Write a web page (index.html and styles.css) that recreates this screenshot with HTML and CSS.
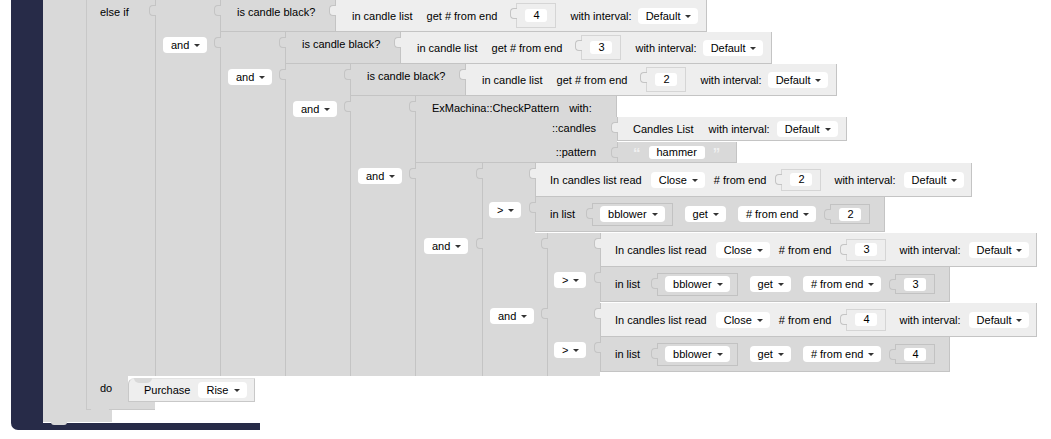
FILE: index.html
```html
<!DOCTYPE html>
<html lang="en">
<head>
  <meta charset="UTF-8" />
  <title>Strategy Blocks</title>
  <meta name="viewport" content="width=device-width, initial-scale=1.0" />
  <link rel="stylesheet" href="styles.css">
</head>
<body>

  <div class="workspace">
    <div class="navy">
      <div class="navy-row">
        <div class="navy-arm"></div>

        <div class="outer">
          <div class="outer-row">
            <div class="outer-arm"></div>

            <!-- else if / do block -->
            <div class="ifb">
              <div class="ifb-row">
                <div class="ifb-lbl"><span class="t">else if</span></div>
                <div class="slot">

                  <!-- and #1 -->
                  <div class="vb logic">
                    <div class="row">
                      <div class="lbl"></div>
                      <div class="slot">
                        <div class="vb inline">
                          <div class="is-black"><span class="t">is candle black?</span></div>
                          <div class="slot">
                            <div class="vb flat light incandle">
                              <span class="t">in candle list</span>
                              <span class="t">get # from end</span>
                              <span class="vb num"><span class="field">4</span></span>
                              <span class="pair"><span class="t">with interval:</span><span class="dd">Default</span></span>
                            </div>
                          </div>
                        </div>
                      </div>
                    </div>
                    <div class="row">
                      <div class="lbl"><span class="dd">and</span></div>
                      <div class="slot">

                        <!-- and #2 -->
                        <div class="vb logic">
                          <div class="row">
                            <div class="lbl"></div>
                            <div class="slot">
                              <div class="vb inline">
                                <div class="is-black"><span class="t">is candle black?</span></div>
                                <div class="slot">
                                  <div class="vb flat light incandle">
                                    <span class="t">in candle list</span>
                                    <span class="t">get # from end</span>
                                    <span class="vb num"><span class="field">3</span></span>
                                    <span class="pair"><span class="t">with interval:</span><span class="dd">Default</span></span>
                                  </div>
                                </div>
                              </div>
                            </div>
                          </div>
                          <div class="row">
                            <div class="lbl"><span class="dd">and</span></div>
                            <div class="slot">

                              <!-- and #3 -->
                              <div class="vb logic">
                                <div class="row">
                                  <div class="lbl"></div>
                                  <div class="slot">
                                    <div class="vb inline">
                                      <div class="is-black"><span class="t">is candle black?</span></div>
                                      <div class="slot">
                                        <div class="vb flat light incandle">
                                          <span class="t">in candle list</span>
                                          <span class="t">get # from end</span>
                                          <span class="vb num"><span class="field">2</span></span>
                                          <span class="pair"><span class="t">with interval:</span><span class="dd">Default</span></span>
                                        </div>
                                      </div>
                                    </div>
                                  </div>
                                </div>
                                <div class="row">
                                  <div class="lbl"><span class="dd">and</span></div>
                                  <div class="slot">

                                    <!-- and #4 -->
                                    <div class="vb logic">
                                      <div class="row">
                                        <div class="lbl"></div>
                                        <div class="slot">
                                          <div class="vb pattern">
                                            <div class="row">
                                              <div class="lbl head"><span class="t">ExMachina::CheckPattern</span><span class="t">with:</span></div>
                                            </div>
                                            <div class="row">
                                              <div class="lbl arg"><span class="t">::candles</span></div>
                                              <div class="slot">
                                                <div class="vb flat light candles">
                                                  <span class="t">Candles List</span>
                                                  <span class="pair"><span class="t">with interval:</span><span class="dd">Default</span></span>
                                                </div>
                                              </div>
                                            </div>
                                            <div class="row">
                                              <div class="lbl arg last"><span class="t">::pattern</span></div>
                                              <div class="slot">
                                                <div class="vb flat text-blk">
                                                  <span class="quote">“</span>
                                                  <span class="field">hammer</span>
                                                  <span class="quote">”</span>
                                                </div>
                                              </div>
                                            </div>
                                          </div>
                                        </div>
                                      </div>
                                      <div class="row">
                                        <div class="lbl"><span class="dd">and</span></div>
                                        <div class="slot">

                                          <!-- and #5 -->
                                          <div class="vb logic wide">
                                            <div class="row">
                                              <div class="lbl"></div>
                                              <div class="slot">
                                                <div class="vb logic gt">
                                                  <div class="row">
                                                    <div class="lbl"></div>
                                                    <div class="slot">
                                                      <div class="vb flat light read">
                                                        <span class="t">In candles list read</span>
                                                        <span class="dd">Close</span>
                                                        <span class="t"># from end</span>
                                                        <span class="vb num"><span class="field">2</span></span>
                                                        <span class="pair"><span class="t">with interval:</span><span class="dd">Default</span></span>
                                                      </div>
                                                    </div>
                                                  </div>
                                                  <div class="row">
                                                    <div class="lbl"><span class="dd">&gt;</span></div>
                                                    <div class="slot">
                                                      <div class="vb flat inlist">
                                                        <span class="t">in list</span>
                                                        <span class="vb var"><span class="dd">bblower</span></span>
                                                        <span class="dd">get</span>
                                                        <span class="dd"># from end</span>
                                                        <span class="vb num"><span class="field">2</span></span>
                                                      </div>
                                                    </div>
                                                  </div>
                                                </div>
                                              </div>
                                            </div>
                                            <div class="row">
                                              <div class="lbl"><span class="dd">and</span></div>
                                              <div class="slot">

                                                <!-- and #6 -->
                                                <div class="vb logic">
                                                  <div class="row">
                                                    <div class="lbl"></div>
                                                    <div class="slot">
                                                      <div class="vb logic gt">
                                                        <div class="row">
                                                          <div class="lbl"></div>
                                                          <div class="slot">
                                                            <div class="vb flat light read">
                                                              <span class="t">In candles list read</span>
                                                              <span class="dd">Close</span>
                                                              <span class="t"># from end</span>
                                                              <span class="vb num"><span class="field">3</span></span>
                                                              <span class="pair"><span class="t">with interval:</span><span class="dd">Default</span></span>
                                                            </div>
                                                          </div>
                                                        </div>
                                                        <div class="row">
                                                          <div class="lbl"><span class="dd">&gt;</span></div>
                                                          <div class="slot">
                                                            <div class="vb flat inlist">
                                                              <span class="t">in list</span>
                                                              <span class="vb var"><span class="dd">bblower</span></span>
                                                              <span class="dd">get</span>
                                                              <span class="dd"># from end</span>
                                                              <span class="vb num"><span class="field">3</span></span>
                                                            </div>
                                                          </div>
                                                        </div>
                                                      </div>
                                                    </div>
                                                  </div>
                                                  <div class="row">
                                                    <div class="lbl"><span class="dd">and</span></div>
                                                    <div class="slot">
                                                      <div class="vb logic gt tail">
                                                        <div class="row">
                                                          <div class="lbl"></div>
                                                          <div class="slot">
                                                            <div class="vb flat light read">
                                                              <span class="t">In candles list read</span>
                                                              <span class="dd">Close</span>
                                                              <span class="t"># from end</span>
                                                              <span class="vb num"><span class="field">4</span></span>
                                                              <span class="pair"><span class="t">with interval:</span><span class="dd">Default</span></span>
                                                            </div>
                                                          </div>
                                                        </div>
                                                        <div class="row">
                                                          <div class="lbl"><span class="dd">&gt;</span></div>
                                                          <div class="slot">
                                                            <div class="vb flat inlist">
                                                              <span class="t">in list</span>
                                                              <span class="vb var"><span class="dd">bblower</span></span>
                                                              <span class="dd">get</span>
                                                              <span class="dd"># from end</span>
                                                              <span class="vb num"><span class="field">4</span></span>
                                                            </div>
                                                          </div>
                                                        </div>
                                                      </div>
                                                    </div>
                                                  </div>
                                                </div>

                                              </div>
                                            </div>
                                          </div>

                                        </div>
                                      </div>
                                    </div>

                                  </div>
                                </div>
                              </div>

                            </div>
                          </div>
                        </div>

                      </div>
                    </div>
                  </div>

                </div>
              </div>

              <div class="ifb-do">
                <div class="ifb-arm"><span class="t">do</span></div>
                <div class="purchase">
                  <span class="t">Purchase</span>
                  <span class="dd">Rise</span>
                </div>
              </div>
              <div class="ifb-bar"></div>
            </div>
          </div>
          <div class="outer-bar"></div>
        </div>
      </div>
      <div class="navy-bar"></div>
    </div>
  </div>

</body>
</html>
```

FILE: styles.css
```css
*, *::before, *::after {
  box-sizing: border-box;
}

body {
  margin: 0;
  background: #fff;
  font-family: 'Liberation Sans', Arial, sans-serif;
  font-size: 11px;
  color: #000;
}

.workspace {
  width: 1051px;
  height: 439px;
  overflow: hidden;
  padding-left: 11px;
}

.t {
  white-space: nowrap;
  line-height: 14px;
}

/* outer dark block */
.navy {
  display: flex;
  flex-direction: column;
  align-items: flex-start;
}

.navy-row {
  display: flex;
}

.navy-arm {
  width: 32px;
  background: #272b48;
}

.navy-bar {
  width: 249px;
  height: 7px;
  background: #272b48;
  border-radius: 0 0 0 7px;
}

/* grey statement wrapper */
.outer {
  display: flex;
  flex-direction: column;
  align-items: flex-start;
  padding-bottom: 1px;
}

.outer-row {
  display: flex;
}

.outer-arm {
  width: 43px;
  background: #d9d9d9;
}

.outer-bar {
  position: relative;
  width: 69px;
  height: 12px;
  background: #d9d9d9;
}

.outer-bar::after, .ifb-bar::after {
  content: "";
  position: absolute;
  bottom: -3px;
  height: 3px;
  background: #d9d9d9;
  border-radius: 0 0 4px 4px;
}

.outer-bar::after {
  left: 8px;
  width: 16px;
}

/* else if / do */
.ifb {
  display: flex;
  flex-direction: column;
  align-items: flex-start;
}

.ifb-row {
  display: flex;
}

.ifb-lbl {
  width: 69px;
  background: #d9d9d9;
  border-left: 1px solid #c8c8c8;
  padding: 5px 0 0 13px;
}

.ifb-do {
  display: flex;
  align-items: flex-start;
}

.ifb-arm {
  align-self: stretch;
  width: 42px;
  background: #d9d9d9;
  border-left: 1px solid #c8c8c8;
  padding: 5px 0 0 13px;
}

.ifb-bar {
  position: relative;
  width: 69px;
  height: 8px;
  background: #d9d9d9;
  border-left: 1px solid #c8c8c8;
  border-bottom: 1px solid #c8c8c8;
}

.ifb-bar::after {
  left: 4px;
  width: 18px;
}

.purchase {
  position: relative;
  display: flex;
  align-items: center;
  gap: 8px;
  height: 24px;
  margin-top: 2px;
  padding: 0 7px 0 15px;
  background: #eee;
  border: 1px solid #c8c8c8;
  border-top-color: #e2e2e2;
  border-radius: 6px 0 0 0;
}

.purchase::before {
  content: "";
  position: absolute;
  left: 5px;
  top: -1px;
  width: 18px;
  height: 5px;
  background: #d9d9d9;
  border-radius: 0 0 5px 5px;
}

/* value blocks */
.vb {
  position: relative;
}

.vb::before {
  content: "";
  position: absolute;
  left: -6px;
  top: 5px;
  width: 7px;
  height: 11px;
  border: 1px solid #c4c4c4;
  border-right: none;
  border-radius: 4px 0 0 4px;
  background: #d9d9d9;
}

.flat::before, .num::before, .var::before {
  left: -7px;
  background: inherit;
}

.num::before, .var::before {
  top: 4px;
}

.row {
  display: flex;
}

.slot {
  display: flex;
  align-items: flex-start;
}

.logic, .pattern {
  display: flex;
  flex-direction: column;
}

.logic > .row > .lbl {
  width: 65px;
  background: #d9d9d9;
  border-left: 1px solid #c4c4c4;
  padding: 5px 0 0 7px;
}

.logic.wide > .row > .lbl {
  width: 67px;
  padding-left: 8px;
}

.logic.gt > .row > .lbl {
  width: 53px;
  padding-left: 6px;
}

.gt > .row:last-child > .slot {
  padding-bottom: 1px;
}

.gt.tail > .row:last-child > .slot {
  padding-bottom: 4px;
}

.inline {
  display: flex;
}

.is-black {
  width: 115px;
  background: #d9d9d9;
  border-left: 1px solid #c4c4c4;
  border-bottom: 1px solid #c4c4c4;
  padding: 5px 0 0 16px;
}

.pattern > .row > .lbl {
  width: 202px;
  background: #d9d9d9;
  border-left: 1px solid #c4c4c4;
}

.head {
  display: flex;
  gap: 10px;
  height: 21px;
  padding: 5px 0 0 16px;
  border-right: 1px solid #c4c4c4;
}

.arg {
  text-align: right;
  padding: 4px 21px 0 0;
}

.arg.last {
  border-bottom: 1px solid #c4c4c4;
}

.flat {
  display: flex;
  align-items: center;
  white-space: nowrap;
  background: #d9d9d9;
  border: 1px solid #c4c4c4;
  border-top: none;
}

.light {
  background: #eee;
}

.incandle {
  height: 32px;
  gap: 14px;
  padding: 0 8px 0 16px;
}

.incandle .num {
  height: 25px;
}

.incandle .pair {
  gap: 6px;
}

.read {
  height: 34px;
  gap: 9px;
  padding: 0 7px 0 14px;
}

.read .num {
  margin-left: 6px;
}

.read .pair {
  margin-left: 4px;
  gap: 8px;
}

.inlist {
  height: 35px;
  gap: 12px;
  padding: 0 14px 0 14px;
}

.inlist .num {
  margin-left: 2px;
  height: 20px;
}

.candles {
  height: 24px;
  gap: 15px;
  padding: 0 8px 0 15px;
}

.text-blk {
  height: 21px;
  gap: 8px;
  margin-top: 1px;
  padding: 0 16px 0 15px;
}

.quote {
  font-size: 15px;
  font-weight: bold;
  line-height: 15px;
  color: #f0f0f0;
}

.pair {
  display: flex;
  align-items: center;
  gap: 7px;
}

.num {
  display: flex;
  align-items: center;
  height: 22px;
  margin-left: 5px;
  padding: 0 8px;
  background: inherit;
  border: 1px solid rgba(0, 0, 0, 0.1);
}

.var {
  display: flex;
  align-items: center;
  height: 23px;
  margin-left: 5px;
  padding: 0 7px;
  background: inherit;
  border: 1px solid rgba(0, 0, 0, 0.1);
}

.field {
  display: flex;
  align-items: center;
  justify-content: center;
  min-width: 22px;
  height: 13px;
  padding: 0 7px;
  background: #fff;
  border-radius: 3px;
  line-height: 13px;
}

.text-blk .field {
  padding: 0 8px;
}

/* dropdown fields */
.dd {
  display: inline-flex;
  align-items: center;
  gap: 5px;
  height: 16px;
  padding: 0 7px 0 8px;
  background: #fff;
  border-radius: 4px;
  white-space: nowrap;
  line-height: 14px;
}

.dd::after {
  content: "";
  margin-top: 1px;
  border-left: 3px solid transparent;
  border-right: 3px solid transparent;
  border-top: 3px solid #333;
}
```
